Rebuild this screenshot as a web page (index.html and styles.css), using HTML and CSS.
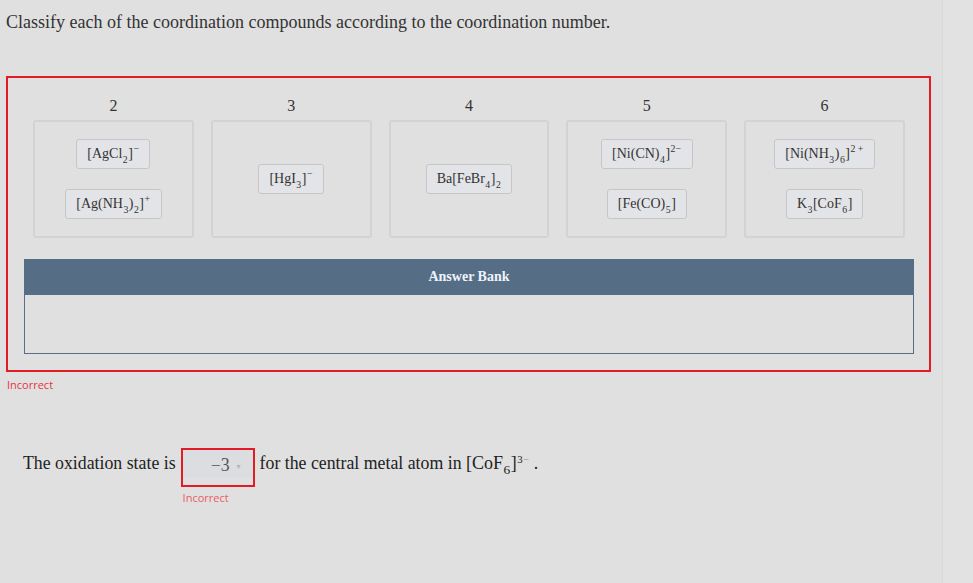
FILE: index.html
```html
<!DOCTYPE html>
<html>
<head>
<meta charset="utf-8">
<link rel="stylesheet" href="styles.css">
</head>
<body>
<div class="layout">
  <main class="main">
    <p class="title">Classify each of the coordination compounds according to the coordination number.</p>
    <div class="dnd">
      <div class="cols">
        <div class="col">
          <div class="col-head">2</div>
          <div class="bin">
            <span class="chip">[AgCl<sub>2</sub>]<sup>−</sup></span>
            <span class="chip">[Ag(NH<sub>3</sub>)<sub>2</sub>]<sup>+</sup></span>
          </div>
        </div>
        <div class="col">
          <div class="col-head">3</div>
          <div class="bin">
            <span class="chip">[HgI<sub>3</sub>]<sup>−</sup></span>
          </div>
        </div>
        <div class="col">
          <div class="col-head">4</div>
          <div class="bin">
            <span class="chip">Ba[FeBr<sub>4</sub>]<sub>2</sub></span>
          </div>
        </div>
        <div class="col">
          <div class="col-head">5</div>
          <div class="bin">
            <span class="chip">[Ni(CN)<sub>4</sub>]<sup>2−</sup></span>
            <span class="chip">[Fe(CO)<sub>5</sub>]</span>
          </div>
        </div>
        <div class="col">
          <div class="col-head">6</div>
          <div class="bin">
            <span class="chip">[Ni(NH<sub>3</sub>)<sub>6</sub>]<sup>2 +</sup></span>
            <span class="chip">K<sub>3</sub>[CoF<sub>6</sub>]</span>
          </div>
        </div>
      </div>
      <div class="bank">
        <div class="bank-head">Answer Bank</div>
        <div class="bank-body"></div>
      </div>
    </div>
    <div class="incorrect first">Incorrect</div>

    <div class="sentence">
      <span class="stext">The oxidation state is</span>
      <div class="selwrap">
        <div class="select">
          <span class="selval">−3</span>
          <span class="caret">▾</span>
        </div>
        <div class="incorrect second">Incorrect</div>
      </div>
      <span class="stext">for the central metal atom in <span class="formula">[CoF<sub class="big">6</sub>]<sup class="big">3<span class="lite">−</span></sup></span> .</span>
    </div>
  </main>
  <aside class="side"></aside>
</div>
</body>
</html>
```
FILE: styles.css
```css
html, body {
  margin: 0;
  padding: 0;
  background: #e0e0e0;
}
body {
  font-family: "Liberation Serif", "Times New Roman", serif;
  color: #333;
}
.layout {
  display: flex;
  height: 583px;
  overflow: hidden;
}
.main {
  width: 942px;
  flex: none;
}
.side {
  flex: 1;
  background: #e2e2e2;
  border-left: 1px solid #d9d9d9;
}
.title {
  margin: 0;
  padding: 12px 0 0 6px;
  font-size: 18px;
  line-height: 20px;
  color: #333;
}
.dnd {
  margin: 44px 0 0 6px;
  width: 921px;
  height: 292px;
  border: 2px solid #e21b25;
}
.cols {
  display: grid;
  grid-template-columns: repeat(5, 1fr);
  column-gap: 17px;
  padding: 0 24px 0 25px;
}
.col-head {
  text-align: center;
  font-size: 16px;
  line-height: 20px;
  padding-top: 18px;
  height: 24px;
  color: #333;
}
.bin {
  height: 114px;
  border: 2px solid #d3d3d3;
  border-radius: 3px;
  display: flex;
  flex-direction: column;
  align-items: center;
  justify-content: center;
  gap: 20px;
}
.chip {
  display: inline-flex;
  align-items: center;
  height: 28px;
  padding: 0 10px;
  border: 1px solid #c6c6c6;
  border-radius: 3px;
  background: #e3e4e7;
  font-size: 14px;
  line-height: 16px;
  color: #333;
  white-space: nowrap;
}
sub, sup {
  font-size: 70%;
  line-height: 0;
  position: relative;
  vertical-align: baseline;
  margin: 0 0.5px;
}
sub { top: 0.6em; }
sup { top: -0.55em; }
.bank {
  margin: 21px 15px 0 16px;
}
.bank-head {
  height: 36px;
  background: #566d86;
  color: #eef3fa;
  font-weight: bold;
  font-size: 14px;
  line-height: 36px;
  text-align: center;
}
.bank-body {
  height: 58px;
  border: 1px solid #5a6e87;
  border-top: none;
}
.incorrect {
  font-family: "Open Sans", "Noto Sans", sans-serif;
  font-size: 11px;
  line-height: 14px;
  color: #e8333f;
}
.incorrect.first {
  margin: 6px 0 0 7px;
}
.sentence {
  display: flex;
  align-items: flex-start;
  margin: 56px 0 0 23px;
  font-family: "Liberation Serif", "Times New Roman", serif;
}
.stext {
  font-family: "Liberation Serif", "Times New Roman", serif;
  font-size: 17.8px;
  line-height: 22px;
  padding-top: 4px;
  color: #222;
}
.selwrap {
  margin: 0 5px 0 5px;
  display: flex;
  flex-direction: column;
}
.select {
  width: 70px;
  height: 35px;
  border: 2px solid #e21b25;
  display: flex;
  align-items: flex-start;
  justify-content: flex-end;
  background: linear-gradient(#dcdde0 0 28px, #e0e0e0 28px);
}
.selval {
  font-family: "Liberation Serif", "Times New Roman", serif;
  font-size: 17.8px;
  line-height: 22px;
  padding-top: 4px;
  color: #555;
}
.caret {
  font-family: "DejaVu Sans", sans-serif;
  font-size: 8px;
  color: #b5b5b5;
  padding: 12px 12px 0 7px;
  line-height: 10px;
}
.incorrect.second {
  margin: 4px 0 0 2px;
  color: #ee5a66;
}
.formula {
  font-size: 18px;
}
.formula sub.big { top: 0.4em; font-size: 75%; }
.formula sup.big { top: -0.6em; font-size: 60%; }
.lite { color: #999; }
```
